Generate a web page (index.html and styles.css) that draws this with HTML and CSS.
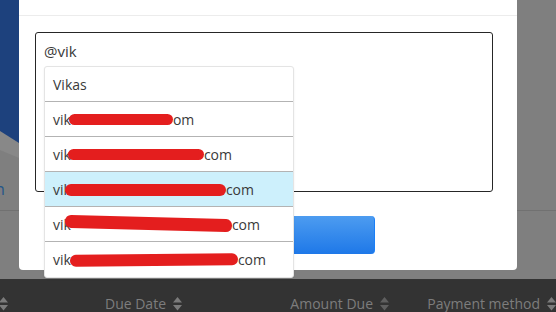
FILE: index.html
```html
<!DOCTYPE html>
<html>
<head>
    <meta charset="UTF-8" />
    <title>Mention</title>
    <link rel="stylesheet" href="styles.css">
</head>
<body>
<div class="page">
    <div class="page-top">
        <svg class="hero" width="19" height="160" viewBox="0 0 19 160">
            <polygon points="0,0 19,0 19,158 0,150" fill="#888888" />
            <polygon points="0,0 19,0 19,143 0,131" fill="#1d417d" />
        </svg>
        <div class="side-link">n</div>
        <div class="rule"></div>
    </div>
    <div class="table-head">
        <div class="th"><svg class="sort" width="9" height="14" viewBox="0 0 9 14"><path d="M4.5 0 L9 5.5 H0 Z M0 8 H9 L4.5 13.5 Z" fill="#7b7b7b"/></svg></div>
        <div class="th">Due Date <svg class="sort" width="9" height="14" viewBox="0 0 9 14"><path d="M4.5 0 L9 5.5 H0 Z M0 8 H9 L4.5 13.5 Z" fill="#7b7b7b"/></svg></div>
        <div class="th">Amount Due <svg class="sort" width="9" height="14" viewBox="0 0 9 14"><path d="M4.5 0 L9 5.5 H0 Z M0 8 H9 L4.5 13.5 Z" fill="#5f5f5f"/></svg></div>
        <div class="th">Payment method <svg class="sort" width="9" height="14" viewBox="0 0 9 14"><path d="M4.5 0 L9 5.5 H0 Z M0 8 H9 L4.5 13.5 Z" fill="#7b7b7b"/></svg></div>
    </div>
</div>

<div class="modal">
    <div class="modal-head"></div>
    <div class="modal-body">
        <div class="editor">
            <div class="editor-text">@vik</div>
            <ul class="mentions">
                <li>Vikas</li>
                <li>vik<span class="redact r2"></span>om</li>
                <li>vik<span class="redact r3"></span>com</li>
                <li class="active">vik<span class="redact r4"></span>com</li>
                <li>vik<span class="redact r5"></span>com</li>
                <li>vik<span class="redact r6"></span>com</li>
            </ul>
        </div>
        <div class="actions">
            <button class="btn-primary"></button>
        </div>
    </div>
</div>
</body>
</html>
```

FILE: styles.css
```css
* {
    font-family: "Open Sans", "Liberation Sans", sans-serif;
    margin : 0px;
    padding : 0px;
    box-sizing : border-box;
}

body {
    width : 556px;
    height : 312px;
    overflow : hidden;
    background-color : #7f7f7f;
}

ul {
    list-style : none;
}

.page-top {
    height : 279px;
    background-color : #7f7f7f;
}

.hero { display : block; }

.side-link {
    height : 50px;
    margin-left : -5px;
    padding-top : 19px;
    font-size : 16px;
    line-height : 20px;
    color : #24558a;
}

.rule {
    border-top : 1px solid #717171;
}

.table-head {
    height : 33px;
    background-color : #333333;
    display : grid;
    grid-template-columns : 8px 174px 207px 167px;
}

.th {
    display : flex;
    justify-content : flex-end;
    align-items : center;
    gap : 7px;
    padding-top : 17px;
    font-size : 14px;
    line-height : 16px;
    color : #7d7d7d;
    white-space : nowrap;
}

.sort { flex : none; }

.modal {
    position : absolute;
    left : 19px;
    top : 0px;
    width : 498px;
    height : 270px;
    background-color : #ffffff;
    border-radius : 0 0 4px 4px;
}

.modal-head {
    height : 16px;
    border-bottom : 1px solid #ececec;
}

.modal-body {
    padding : 16px 24px 16px 16px;
}

.editor {
    position : relative;
    height : 160px;
    border : 1px solid #262626;
    border-radius : 3px;
    padding : 8px;
}

.editor-text {
    font-size : 15px;
    line-height : 20px;
    color : #3a3a3a;
}

.mentions {
    position : absolute;
    left : 8px;
    top : 33px;
    width : 250px;
    background-color : #ffffff;
    border : 1px solid #e4e4e4;
    border-radius : 3px;
    box-shadow : 0 1px 2px rgba(0, 0, 0, 0.08);
    z-index : 2;
}

.mentions > li {
    height : 35px;
    display : flex;
    align-items : center;
    padding-left : 8px;
    font-size : 14px;
    color : #3a3a3a;
    border-bottom : 1px solid #b3b3b3;
}

.mentions > li:last-child { border-bottom : none; }

.mentions > li.active { background-color : #cdf0fc; }

.redact {
    display : inline-block;
    height : 11px;
    background-color : #e41e1e;
    border-radius : 6px;
}

.r2 { width : 104px; margin : 0 0 -1px -2px; }
.r3 { width : 136px; margin : 1px 0 0 -3px; }
.r4 { width : 161px; margin : 2px 0 0 -6px; height : 12px; }
.r5 { width : 167px; margin : -1px 0 0 -6px; height : 13px; transform : rotate(1.5deg); }
.r6 { width : 168px; margin : 0 0 0 -1px; height : 12px; transform : rotate(-0.6deg); }

.actions {
    display : flex;
    justify-content : center;
    margin-top : 24px;
}

.btn-primary {
    width : 222px;
    height : 38px;
    border : none;
    border-right : 1px solid #1a7ff7;
    border-radius : 4px;
    background : linear-gradient(#4d9cf0, #1e78e8);
}
```
